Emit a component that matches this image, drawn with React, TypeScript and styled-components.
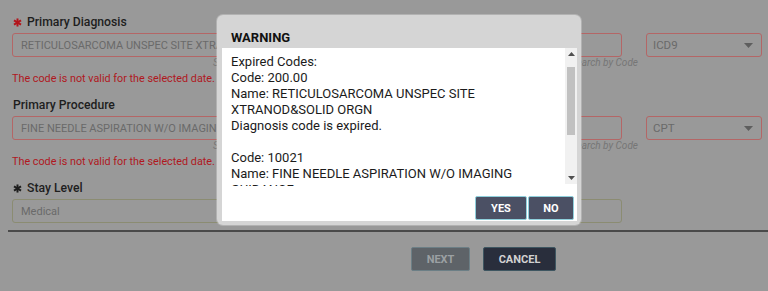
import styled, { createGlobalStyle } from 'styled-components';

const GlobalStyle = createGlobalStyle`
    html, body {
        margin: 0;
        padding: 0;
        background: #999999;
    }
    body {
        font-family: Roboto, "Noto Sans", "Liberation Sans", sans-serif;
    }
    * {
        box-sizing: border-box;
    }
`;

const Asterisk = ({ color }: { color: string }) => (
    <svg width="9" height="9" viewBox="0 0 10 10">
        <g stroke={color} strokeWidth="2.2" strokeLinecap="butt">
            <line x1="5" y1="0.5" x2="5" y2="9.5" />
            <line x1="1.1" y1="2.75" x2="8.9" y2="7.25" />
            <line x1="1.1" y1="7.25" x2="8.9" y2="2.75" />
        </g>
    </svg>
);

const Caret = () => (
    <svg width="9" height="5" viewBox="0 0 9 5">
        <path d="M0 0 H9 L4.5 5 Z" fill="#5e5e5e" />
    </svg>
);

const Arrow = ({ up }: { up?: boolean }) => (
    <svg width="7" height="4" viewBox="0 0 7 4">
        <path d={up ? 'M0 4 H7 L3.5 0 Z' : 'M0 0 H7 L3.5 4 Z'} fill="#505050" />
    </svg>
);

interface CodeRowProps {
    description: string;
    codeType: string;
}

const CodeRow = ({ description, codeType }: CodeRowProps) => (
    <>
        <Row>
            <DescCol>
                <TextInput readOnly value={description} $border="#b46666" />
                <Helper $offset={201}>Search by Description</Helper>
            </DescCol>
            <CodeCol>
                <TextInput readOnly value="" $border="#b46666" style={{ width: 142 }} />
                <Helper $align="right">Search by Code</Helper>
            </CodeCol>
            <TypeCol>
                <Select>
                    <span>{codeType}</span>
                    <Caret />
                </Select>
            </TypeCol>
        </Row>
        <ErrorText>The code is not valid for the selected date.</ErrorText>
    </>
);

const App = () => {
    return (
        <Page>
            <GlobalStyle />
            <Form>
                <FieldGroup>
                    <Label>
                        <Asterisk color="#b3151c" />
                        Primary Diagnosis
                    </Label>
                    <CodeRow description="RETICULOSARCOMA UNSPEC SITE XTRANOD&SOLID ORGN" codeType="ICD9" />
                </FieldGroup>
                <FieldGroup>
                    <Label>Primary Procedure</Label>
                    <CodeRow description="FINE NEEDLE ASPIRATION W/O IMAGING GUIDANCE" codeType="CPT" />
                </FieldGroup>
                <FieldGroup>
                    <Label>
                        <Asterisk color="#1e1e1e" />
                        Stay Level
                    </Label>
                    <TextInput readOnly value="Medical" $border="#8b8c72" style={{ width: 610 }} />
                </FieldGroup>
            </Form>
            <Divider />
            <ButtonBar>
                <PageButton $bg="#5e6368" $border="#6c7f86" $color="#9ba0a3" $width={59}>NEXT</PageButton>
                <PageButton $bg="#292e3c" $border="#3e5661" $color="#d2d2d2" $width={73}>CANCEL</PageButton>
            </ButtonBar>

            <Dialog>
                <DialogTitle>WARNING</DialogTitle>
                <DialogBody>
                    <ScrollFrame>
                        <ScrollArea>
                            <Block>
                                Expired Codes:
                                <br />
                                Code: 200.00
                                <br />
                                Name: RETICULOSARCOMA UNSPEC SITE XTRANOD&amp;SOLID ORGN
                                <br />
                                Diagnosis code is expired.
                            </Block>
                            <Block>
                                Code: 10021
                                <br />
                                Name: FINE NEEDLE ASPIRATION W/O IMAGING GUIDANCE
                                <br />
                                Procedure code is expired.
                            </Block>
                            <Block>Do you want to continue?</Block>
                        </ScrollArea>
                        <ScrollBar>
                            <ArrowButton><Arrow up /></ArrowButton>
                            <Track>
                                <Thumb />
                            </Track>
                            <ArrowButton><Arrow /></ArrowButton>
                        </ScrollBar>
                    </ScrollFrame>
                    <DialogFooter>
                        <DialogButton $width={52}>YES</DialogButton>
                        <DialogButton $width={46}>NO</DialogButton>
                    </DialogFooter>
                </DialogBody>
            </Dialog>
        </Page>
    );
};

const Page = styled.div`
    position: relative;
    width: 768px;
    height: 291px;
    overflow: hidden;
    padding-left: 8px;
`;

const Form = styled.div`
    padding: 14px 0 0 4px;
`;

const FieldGroup = styled.div`
    margin-bottom: 10px;
    &:last-child {
        margin-bottom: 0;
    }
`;

const Label = styled.div`
    display: flex;
    align-items: center;
    gap: 5px;
    height: 16px;
    margin-bottom: 3px;
    padding-left: 1px;
    font-size: 12.2px;
    line-height: 16px;
    font-weight: 500;
    color: #1e1e1e;
`;

const Row = styled.div`
    display: flex;
    flex-direction: row;
`;

const DescCol = styled.div`
    width: 458px;
    margin-right: 10px;
`;

const CodeCol = styled.div`
    width: 158px;
    margin-right: 8px;
`;

const TypeCol = styled.div`
    width: 116px;
`;

const TextInput = styled.input<{ $border: string }>`
    display: block;
    width: 100%;
    height: 24px;
    padding: 0 8px;
    border: 1px solid ${p => p.$border};
    border-radius: 3px;
    background: transparent;
    font-family: inherit;
    font-size: 11px;
    color: #6a6a6a;
    outline: none;
`;

const Select = styled.div`
    display: flex;
    align-items: center;
    justify-content: space-between;
    height: 24px;
    padding: 0 8px 0 6px;
    border: 1px solid #b46666;
    border-radius: 3px;
    font-size: 11.5px;
    color: #6a6a6a;
`;

const Helper = styled.div<{ $align?: string; $offset?: number }>`
    height: 12px;
    padding-left: ${p => p.$offset || 0}px;
    font-size: 10px;
    line-height: 12px;
    font-style: italic;
    color: #767676;
    text-align: ${p => p.$align || 'left'};
    white-space: nowrap;
`;

const ErrorText = styled.div`
    margin-top: 2px;
    font-size: 10.8px;
    line-height: 16px;
    color: #b0181e;
`;

const Divider = styled.div`
    height: 2px;
    margin-top: 7px;
    background: #4a4a4a;
`;

const ButtonBar = styled.div`
    display: flex;
    gap: 13px;
    margin: 15px 0 0 403px;
`;

const PageButton = styled.button<{ $bg: string; $border: string; $color: string; $width: number }>`
    width: ${p => p.$width}px;
    height: 24px;
    padding: 0;
    border: 1px solid ${p => p.$border};
    border-radius: 2px;
    background: ${p => p.$bg};
    color: ${p => p.$color};
    font-family: inherit;
    font-size: 11px;
    font-weight: 700;
`;

const Dialog = styled.div`
    position: absolute;
    left: 217px;
    top: 15px;
    width: 364px;
    padding: 0 4px 4px 5px;
    background: #d5d5d5;
    border-radius: 6px;
    box-shadow: 0 0 0 1px rgba(255, 255, 255, 0.25);
`;

const DialogTitle = styled.div`
    padding: 15px 9px 2px;
    font-size: 13px;
    line-height: 16px;
    font-weight: 700;
    color: #111;
`;

const DialogBody = styled.div`
    background: #ffffff;
`;

const ScrollFrame = styled.div`
    position: relative;
`;

const ScrollArea = styled.div`
    height: 138px;
    overflow: hidden;
    padding: 6px 21px 20px 9px;
    font-size: 13px;
    line-height: 16px;
    color: #1b1b1b;
`;

const ScrollBar = styled.div`
    position: absolute;
    top: 0;
    right: 0;
    bottom: 2px;
    width: 12px;
    display: flex;
    flex-direction: column;
    background: #f1f1f1;
`;

const ArrowButton = styled.div`
    display: flex;
    align-items: center;
    justify-content: center;
    height: 12px;
    flex-shrink: 0;
`;

const Track = styled.div`
    flex: 1;
    padding: 7px 2px 0;
`;

const Thumb = styled.div`
    height: 68px;
    background: #c1c1c1;
`;

const Block = styled.p`
    margin: 0 0 16px;
    &:last-child {
        margin-bottom: 0;
    }
`;

const DialogFooter = styled.div`
    display: flex;
    justify-content: flex-end;
    gap: 1px;
    padding: 10px 3px 1px;
`;

const DialogButton = styled.button<{ $width: number }>`
    width: ${p => p.$width}px;
    height: 24px;
    padding: 0;
    border: 1px solid #8fd0dc;
    border-radius: 2px;
    background: #4b5064;
    color: #ffffff;
    font-family: inherit;
    font-size: 11px;
    font-weight: 700;
`;

export default App;
